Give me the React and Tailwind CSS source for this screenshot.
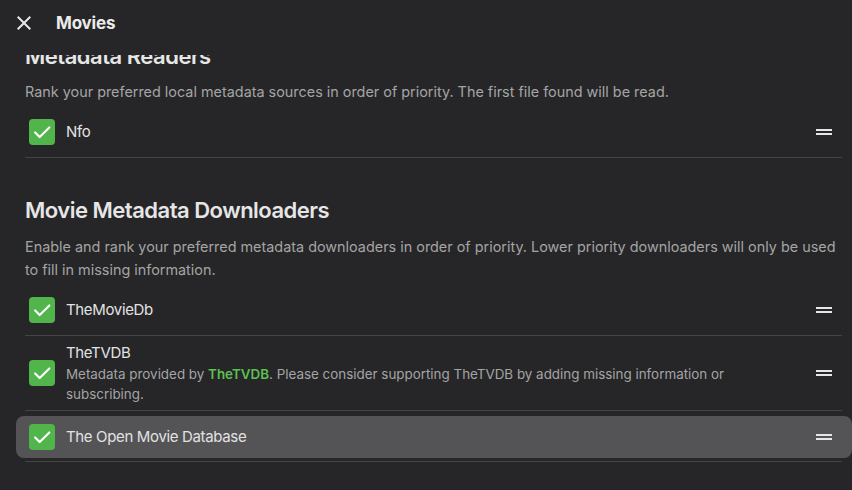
import React from "react";

const font = { fontFamily: "Inter, 'Noto Sans', sans-serif" };

function CheckBox() {
  return (
    <div className="w-[26px] h-[26px] shrink-0 rounded-[4px] bg-[#52b54b] flex items-center justify-center">
      <svg width="22" height="22" viewBox="0 0 24 24" fill="none">
        <path d="M4.5 12.5l5 5L20 7" stroke="white" strokeWidth="2.3" strokeLinecap="round" strokeLinejoin="round" />
      </svg>
    </div>
  );
}

function DragHandle() {
  return (
    <svg width="24" height="24" viewBox="0 0 24 24" className="shrink-0 text-[#e6e6e6]">
      <path d="M20 9H4v2h16V9zM4 15h16v-2H4v2z" fill="currentColor" />
    </svg>
  );
}

function Row({ title, children }) {
  return (
    <div className="min-h-[51px] flex items-center pl-[4px] pr-[6px] py-[6px] border-b border-[#444446]">
      <CheckBox />
      <div className="flex-1 ml-[11px]">
        <div className="text-[15px] leading-[22px] tracking-[-0.35px] text-[#e2e2e2]">{title}</div>
        {children}
      </div>
      <DragHandle />
    </div>
  );
}

export default function App() {
  return (
    <div className="w-[852px] h-[490px] bg-[#262628] flex flex-col overflow-hidden" style={font}>
      <div className="h-[55px] shrink-0 flex items-start pt-[11px]">
        <div className="w-[24px] h-[24px] ml-[12px] flex items-center justify-center">
          <svg width="24" height="24" viewBox="0 0 24 24">
            <path d="M19 6.41L17.59 5 12 10.59 6.41 5 5 6.41 10.59 12 5 17.59 6.41 19 12 13.41 17.59 19 19 17.59 13.41 12z" fill="#e8e8e8" />
          </svg>
        </div>
        <div className="ml-[20px] text-[17px] leading-[24px] font-bold tracking-[-0.2px] text-[#ececec]">Movies</div>
      </div>

      <div className="flex-1 overflow-hidden">
        <div className="pl-[25px] pr-[10px] -mt-[14px]">
          <h2 className="text-[22px] leading-[30px] font-semibold tracking-[-0.5px] text-[#e6e6e6]">Metadata Readers</h2>
          <p className="mt-[9px] text-[14.4px] leading-[23px] text-[#a4a4a4]">
            Rank your preferred local metadata sources in order of priority. The first file found will be read.
          </p>
          <div className="mt-[4px]">
            <Row title="Nfo" />
          </div>

          <h2 className="mt-[37px] text-[22px] leading-[30px] font-semibold tracking-[-0.5px] text-[#e6e6e6]">Movie Metadata Downloaders</h2>
          <p className="mt-[10px] text-[14.4px] leading-[23px] text-[#a4a4a4]">
            Enable and rank your preferred metadata downloaders in order of priority. Lower priority downloaders will only be used to fill in missing information.
          </p>
          <div className="mt-[4px]">
            <Row title="TheMovieDb" />
            <Row title="TheTVDB">
              <div className="max-w-[700px] text-[13.4px] leading-[20px] text-[#a4a4a4]">
                Metadata provided by <span className="font-semibold text-[#5cbf52]">TheTVDB</span>. Please consider supporting TheTVDB by adding missing information or subscribing.
              </div>
            </Row>
            <div className="pt-[5px] pb-[3px] border-b border-[#444446]">
              <div className="h-[42px] -ml-[9px] -mr-[10px] pl-[13px] pr-[16px] rounded-[8px] bg-[#545456] flex items-center">
                <CheckBox />
                <div className="flex-1 ml-[11px] text-[15px] leading-[22px] tracking-[-0.35px] text-[#e2e2e2]">The Open Movie Database</div>
                <DragHandle />
              </div>
            </div>
          </div>
        </div>
      </div>
    </div>
  );
}
